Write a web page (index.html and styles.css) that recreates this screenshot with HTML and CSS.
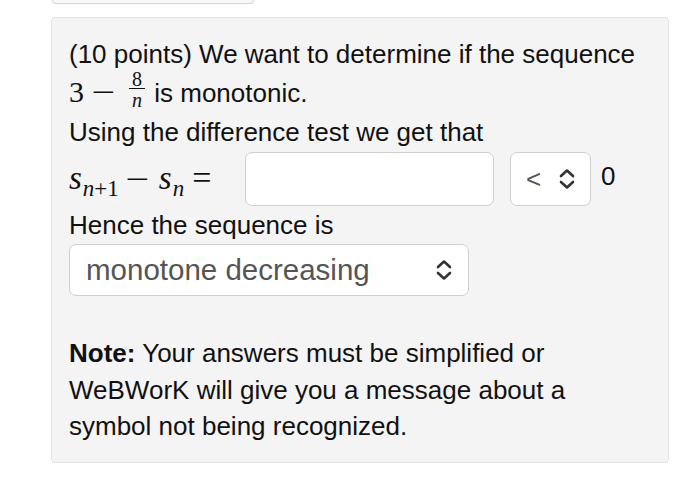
FILE: index.html
```html
<!DOCTYPE html>
<html lang="en">
<head>
  <meta charset="UTF-8" />
  <meta name="viewport" content="width=device-width, initial-scale=1.0"/>
  <title>WeBWorK problem</title>
  <link rel="stylesheet" href="styles.css">
</head>
<body>
  <div class="prev-button"></div>

  <div class="problem">
    <p class="line">(10 points) We want to determine if the sequence<br>
      <span class="math seq">3<span class="op">−</span><span class="frac"><span class="num">8</span><span class="den">n</span></span></span> is monotonic.
    </p>
    <p class="line">Using the difference test we get that</p>

    <div class="answer-row">
      <span class="math eq">
        <i>s</i><sub><i>n</i>+1</sub><span class="op">−</span><i>s</i><sub><i>n</i></sub><span class="eqsign">=</span>
      </span>
      <input type="text" class="answer" aria-label="difference">
      <div class="select small">
        <span>&lt;</span>
        <svg class="updown" viewBox="0 0 18 22" width="18" height="22">
          <path d="M3 8 L9 2.5 L15 8 M3 14 L9 19.5 L15 14" fill="none" stroke="#333" stroke-width="2.6" stroke-linecap="round" stroke-linejoin="round"/>
        </svg>
      </div>
      <span class="zero">0</span>
    </div>

    <p class="line hence">Hence the sequence is</p>
    <div class="select big">
      <span>monotone decreasing</span>
      <svg class="updown" viewBox="0 0 18 22" width="18" height="22">
        <path d="M3 8 L9 2.5 L15 8 M3 14 L9 19.5 L15 14" fill="none" stroke="#333" stroke-width="2.6" stroke-linecap="round" stroke-linejoin="round"/>
      </svg>
    </div>

    <p class="note"><b>Note:</b> Your answers must be simplified or WeBWorK will give you a message about a symbol not being recognized.</p>
  </div>
</body>
</html>
```

FILE: styles.css
```css
* {
  box-sizing: border-box;
}

body {
  margin: 0;
  background: #fff;
  font-family: 'Liberation Sans', Arial, sans-serif;
  color: #111;
}

.prev-button {
  width: 202px;
  height: 4px;
  margin-left: 52px;
  border: 1px solid #d6d6d6;
  border-top: none;
  border-radius: 0 0 6px 6px;
  background: #f7f7f7;
}

.problem {
  width: 618px;
  height: 446px;
  margin: 13px 0 0 51px;
  padding: 17px 17px;
  background: #f4f4f4;
  border: 1px solid #e2e2e2;
  border-radius: 4px;
  font-size: 26px;
}

p {
  margin: 0;
}

.line {
  line-height: 39px;
}

.math {
  font-family: 'Liberation Serif', 'Times New Roman', serif;
  font-size: 30px;
}

.math .op {
  display: inline-block;
  width: 19px;
  text-align: center;
  transform: scaleX(1.4);
}

.seq {
  line-height: 0;
}

.seq .op {
  margin: 0 16px 0 10px;
}

.frac {
  display: inline-flex;
  flex-direction: column;
  align-items: center;
  vertical-align: 16px;
  margin: -8px 2px -8px 0;
  font-size: 20px;
  line-height: 15px;
}

.num {
  padding: 0 3px 1px;
  border-bottom: 1.5px solid #111;
}

.den {
  font-style: italic;
  padding-top: 4px;
}

.answer-row {
  display: flex;
  align-items: center;
  height: 54px;
}

.eq {
  width: 176px;
  white-space: nowrap;
  line-height: 1;
  margin-top: -2px;
}

.eq i {
  font-size: 33px;
}

.eq sub {
  font-size: 23px;
  vertical-align: -7px;
  line-height: 0;
  margin-left: 1px;
}

.eq sub i {
  font-size: 23px;
}

.eq .op {
  margin: 0 12px 0 9px;
}

.eq .eqsign {
  margin-left: 8px;
  font-size: 34px;
}

.answer {
  width: 249px;
  height: 54px;
  border: 1.5px solid #cfcfcf;
  border-radius: 7px;
  background: #fff;
  font-size: 24px;
}

.select {
  display: flex;
  align-items: center;
  justify-content: space-between;
  background: #fff;
  border: 1.5px solid #cfcfcf;
  border-radius: 7px;
  color: #555;
}

.select.small {
  width: 81px;
  height: 54px;
  margin-left: 16px;
  padding: 0 14px 0 15px;
  font-size: 26px;
}

.zero {
  margin-left: 10px;
  margin-top: -6px;
}

.hence {
  line-height: 38px;
}

.select.big {
  width: 400px;
  height: 52px;
  padding: 0 15px 0 16px;
  font-size: 29.5px;
}

.note {
  margin-top: 39px;
  line-height: 36.5px;
}

.note b {
  font-weight: bold;
}
```
